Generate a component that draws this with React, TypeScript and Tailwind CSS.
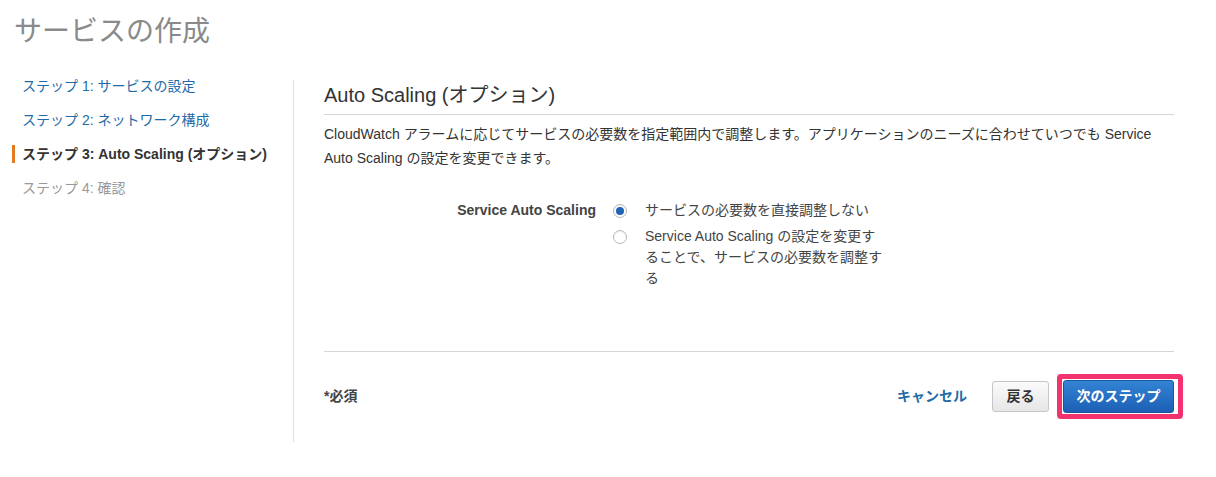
import React from 'react';

const font = { fontFamily: '"Liberation Sans", "Noto Sans CJK JP", sans-serif' };

function Radio({ checked }: { checked?: boolean }) {
  return (
    <span className="mt-[4px] flex h-[14px] w-[14px] shrink-0 items-center justify-center rounded-full border border-[#b9b9b9] bg-white shadow-[inset_0_1px_1px_rgba(0,0,0,0.08)]">
      {checked && <span className="h-[8px] w-[8px] rounded-full bg-[#1f63b6]" />}
    </span>
  );
}

function Sidebar() {
  return (
    <div className="w-[293px] shrink-0 text-[14px]">
      <div className="flex h-[34px] items-center pl-[22px] text-[#1f6aa8]">ステップ 1: サービスの設定</div>
      <div className="flex h-[34px] items-center pl-[22px] text-[#1f6aa8]">ステップ 2: ネットワーク構成</div>
      <div className="flex h-[34px] items-center">
        <span className="ml-[12px] mr-[7px] h-[18px] w-[3px] bg-[#e07b24]" />
        <span className="font-bold text-[#333]">ステップ 3: Auto Scaling (オプション)</span>
      </div>
      <div className="flex h-[34px] items-center pl-[22px] text-[#999]">ステップ 4: 確認</div>
    </div>
  );
}

function Footer() {
  return (
    <div className="mt-[22px] flex items-center text-[14px] font-bold">
      <span className="text-[#444]">*必須</span>
      <span className="ml-auto text-[#1f6aa8]">キャンセル</span>
      <button className="ml-[25px] h-[31px] w-[57px] rounded-[3px] border border-[#c6c6c6] bg-gradient-to-b from-[#fbfbfb] to-[#e6e6e6] text-[14px] font-bold text-[#333]">
        戻る
      </button>
      <div className="-mr-[9px] ml-[8px] rounded-[4px] border-[5px] border-[#f2336f] py-[1px] pl-[1px] pr-[4px]">
        <button className="h-[33px] w-[111px] rounded-[3px] border border-[#1a56a0] bg-gradient-to-b from-[#3383d4] to-[#1c60b5] text-[14px] font-bold text-white">
          次のステップ
        </button>
      </div>
    </div>
  );
}

export default function App() {
  return (
    <div className="h-[477px] w-[1216px] bg-white" style={font}>
      <h1 className="pl-[14px] pt-[14px] text-[28px] leading-[36px] text-[#8a8a8a]">サービスの作成</h1>
      <div className="mt-[19px] flex">
        <Sidebar />
        <div className="mr-[42px] mt-[11px] flex h-[362px] flex-1 flex-col border-l border-[#ddd] pb-[23px] pl-[30px]">
          <h2 className="border-b border-[#d5d5d5] pb-[7px] pt-[3px] text-[20px] leading-[24px] text-[#333]">
            Auto Scaling (オプション)
          </h2>
          <p className="mt-[7px] pr-[8px] text-[14px] leading-[24px] text-[#333]">
            CloudWatch アラームに応じてサービスの必要数を指定範囲内で調整します。アプリケーションのニーズに合わせていつでも Service Auto Scaling の設定を変更できます。
          </p>
          <div className="mt-[30px] flex">
            <div className="w-[272px] shrink-0 text-right text-[14px] font-bold leading-[21px] text-[#444]">
              Service Auto Scaling
            </div>
            <div className="ml-[17px] flex flex-col gap-[5px] text-[14px] leading-[21px] text-[#444]">
              <label className="flex gap-[18px]">
                <Radio checked />
                <span className="w-[240px]">サービスの必要数を直接調整しない</span>
              </label>
              <label className="flex gap-[18px]">
                <Radio />
                <span className="w-[240px]">Service Auto Scaling の設定を変更することで、サービスの必要数を調整する</span>
              </label>
            </div>
          </div>
          <div className="mt-auto border-t border-[#d5d5d5]" />
          <Footer />
        </div>
      </div>
    </div>
  );
}
